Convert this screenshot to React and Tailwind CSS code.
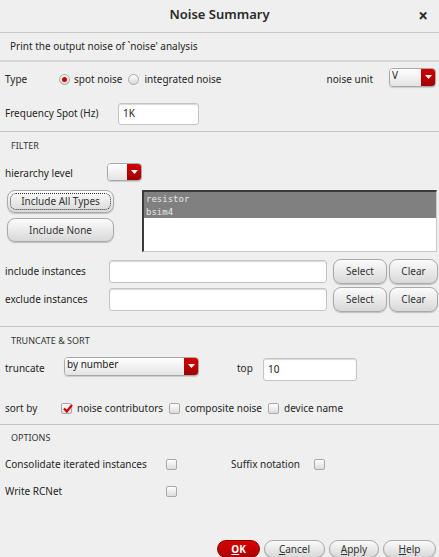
import React from "react";

const font = { fontFamily: '"Noto Sans", "Open Sans", sans-serif' };

function Dropdown({ w, h = "h-[19px]", text }) {
  return (
    <div className={`flex ${w} ${h} rounded-[4px] border border-[#a8a8a8] overflow-hidden shadow-[0_1px_1px_rgba(0,0,0,0.15)]`}>
      <div className="flex-1 bg-gradient-to-b from-[#ffffff] to-[#e4e4e4] text-[10px] leading-[12px] pl-[2px] pt-[0px] text-[#222]">{text}</div>
      <div className="w-[14px] bg-gradient-to-b from-[#d40000] to-[#a00000] flex items-center justify-center">
        <svg width="7" height="4" viewBox="0 0 7 4"><path d="M0 0 L7 0 L3.5 4 Z" fill="#fff" /></svg>
      </div>
    </div>
  );
}

function Btn({ children, className = "", dotted = false }) {
  return (
    <div className={`flex items-center justify-center rounded-[8px] border border-[#a9a9a9] bg-gradient-to-b from-[#fbfbfb] to-[#d9d9d9] text-[10px] text-[#333] shadow-[0_1px_1px_rgba(0,0,0,0.2)] ${className}`}>
      {dotted ? (
        <div className="w-[calc(100%-4px)] h-[calc(100%-4px)] border border-dotted border-[#333] rounded-[6px] flex items-center justify-center">{children}</div>
      ) : children}
    </div>
  );
}

function Input({ className = "", value = "" }) {
  return (
    <div className={`bg-white border border-[#c4c4c4] rounded-[3px] shadow-[inset_0_1px_1px_rgba(0,0,0,0.15)] text-[10px] text-[#222] flex items-center pl-[4px] ${className}`}>{value}</div>
  );
}

function Check({ checked = false }) {
  return (
    <div className="relative w-[11px] h-[11px] rounded-[2px] border border-[#a8a8a8] bg-gradient-to-b from-[#ffffff] to-[#dcdcdc]">
      {checked && (
        <svg className="absolute left-[1px] top-[0px]" width="10" height="9" viewBox="0 0 10 9">
          <path d="M1 4.5 L3.8 7.5 L9 1" stroke="#d00000" strokeWidth="2.2" fill="none" />
        </svg>
      )}
    </div>
  );
}

function Radio({ checked = false }) {
  return (
    <div className="w-[11px] h-[11px] rounded-full border border-[#a8a8a8] bg-gradient-to-b from-[#ffffff] to-[#d8d8d8] flex items-center justify-center">
      {checked && <div className="w-[5px] h-[5px] rounded-full bg-[#d00000]" />}
    </div>
  );
}

export default function App() {
  return (
    <div className="w-[439px] h-[557px] bg-[#efefef] text-[#262626] overflow-hidden flex flex-col" style={font}>
      {/* title */}
      <div className="h-[33px] shrink-0 border-b border-[#c8c8c8] bg-[#efefef] flex items-center relative">
        <div className="w-full text-center text-[13px] font-semibold text-[#2a2a2a] -mt-[3px]">Noise Summary</div>
        <div className="absolute right-[11px] top-[3px] text-[17px] font-bold text-[#2a2a2a]">×</div>
      </div>
      {/* description */}
      <div className="h-[29px] shrink-0 border-b-2 border-[#d6d6d6] flex items-center pl-[10px] text-[10px]">
        Print the output noise of `noise' analysis
      </div>
      {/* type row */}
      <div className="h-[34px] shrink-0 flex items-center text-[10px] relative">
        <span className="ml-[5px] w-[54px]">Type</span>
        <Radio checked />
        <span className="ml-[4px] mr-[6px]">spot noise</span>
        <Radio />
        <span className="ml-[5px]">integrated noise</span>
        <span className="ml-auto mr-[16px]">noise unit</span>
        <div className="mr-[3px] -mt-[4px]"><Dropdown w="w-[47px]" text="V" /></div>
      </div>
      {/* frequency */}
      <div className="h-[35px] shrink-0 flex items-center text-[10px]">
        <span className="ml-[5px] w-[113px]">Frequency Spot (Hz)</span>
        <Input className="w-[81px] h-[22px]" value="1K" />
      </div>
      <div className="h-px shrink-0 bg-[#c4c4c4]" />
      {/* FILTER */}
      <div className="h-[27px] shrink-0 flex items-center pl-[11px] text-[9px] text-[#333]">FILTER</div>
      <div className="h-[28px] shrink-0 flex items-center text-[10px]">
        <span className="ml-[5px] w-[102px]">hierarchy level</span>
        <div className="-mt-[3px]"><Dropdown w="w-[35px]" h="h-[18px]" text="" /></div>
      </div>
      <div className="h-[63px] mt-[3px] shrink-0 flex">
        <div className="ml-[7px] w-[107px] flex flex-col gap-[5px]">
          <Btn className="h-[23px]" dotted>Include All Types</Btn>
          <Btn className="h-[24px]">Include None</Btn>
        </div>
        <div className="ml-[28px] w-[295px] h-[62px] border border-[#c8c8c8] border-t-2 border-l-2 border-t-[#3a3a3a] border-l-[#3a3a3a] bg-white" style={{ fontFamily: '"DejaVu Sans Mono", monospace' }}>
          <div className="bg-[#808080] text-[#e8e8e8] text-[9px] leading-[12.5px] pl-[2px] pt-[1px] h-[26px]">
            <div>resistor</div>
            <div>bsim4</div>
          </div>
        </div>
      </div>
      {/* include / exclude */}
      <div className="h-[27px] mt-[5px] shrink-0 flex items-center text-[10px]">
        <span className="ml-[5px] w-[104px]">include instances</span>
        <Input className="w-[218px] h-[23px]" />
        <Btn className="ml-[6px] w-[54px] h-[25px]">Select</Btn>
        <Btn className="ml-[2px] w-[49px] h-[25px]">Clear</Btn>
      </div>
      <div className="h-[27px] mt-[1px] shrink-0 flex items-center text-[10px]">
        <span className="ml-[5px] w-[104px]">exclude instances</span>
        <Input className="w-[218px] h-[23px]" />
        <Btn className="ml-[6px] w-[54px] h-[25px]">Select</Btn>
        <Btn className="ml-[2px] w-[49px] h-[25px]">Clear</Btn>
      </div>
      <div className="h-[13px] shrink-0" />
      <div className="h-px shrink-0 bg-[#c4c4c4]" />
      {/* TRUNCATE */}
      <div className="h-[27px] shrink-0 flex items-center pl-[11px] text-[9px] text-[#333]">TRUNCATE &amp; SORT</div>
      <div className="h-[28px] shrink-0 flex items-center text-[10px]">
        <span className="ml-[5px] w-[59px]">truncate</span>
        <div className="-mt-[4px]"><Dropdown w="w-[135px]" text="by number" /></div>
        <span className="ml-[38px] w-[26px]">top</span>
        <Input className="w-[94px] h-[23px] mt-[2px]" value="10" />
      </div>
      <div className="h-[14px] shrink-0" />
      <div className="h-[24px] shrink-0 flex items-center text-[10px]">
        <span className="ml-[5px] w-[56px]">sort by</span>
        <Check checked />
        <span className="ml-[5px] mr-[6px]">noise contributors</span>
        <Check />
        <span className="ml-[5px] mr-[6px]">composite noise</span>
        <Check />
        <span className="ml-[5px]">device name</span>
      </div>
      <div className="h-[4px] shrink-0" />
      <div className="h-px shrink-0 bg-[#c4c4c4]" />
      {/* OPTIONS */}
      <div className="h-[26px] shrink-0 flex items-center pl-[11px] text-[9px] text-[#333]">OPTIONS</div>
      <div className="h-[28px] shrink-0 flex items-center text-[10px] -mt-[1px]">
        <span className="ml-[5px] w-[161px]">Consolidate iterated instances</span>
        <Check />
        <span className="ml-[54px] w-[83px]">Suffix notation</span>
        <Check />
      </div>
      <div className="h-[27px] shrink-0 flex items-center text-[10px]">
        <span className="ml-[5px] w-[161px]">Write RCNet</span>
        <Check />
      </div>
      <div className="flex-1" />
      {/* bottom buttons */}
      <div className="h-[18px] mb-[-1px] shrink-0 flex justify-end pr-[3px] gap-[4px] text-[10px]">
        <div className="w-[43px] rounded-[9px] border border-[#8a0000] bg-gradient-to-b from-[#dd0000] to-[#a80000] text-white font-bold flex items-center justify-center">
          <span><span className="underline">O</span>K</span>
        </div>
        <Btn className="w-[61px] rounded-[9px]"><span><span className="underline">C</span>ancel</span></Btn>
        <Btn className="w-[50px] rounded-[9px]"><span><span className="underline">A</span>pply</span></Btn>
        <Btn className="w-[53px] rounded-[9px]"><span><span className="underline">H</span>elp</span></Btn>
      </div>
    </div>
  );
}
